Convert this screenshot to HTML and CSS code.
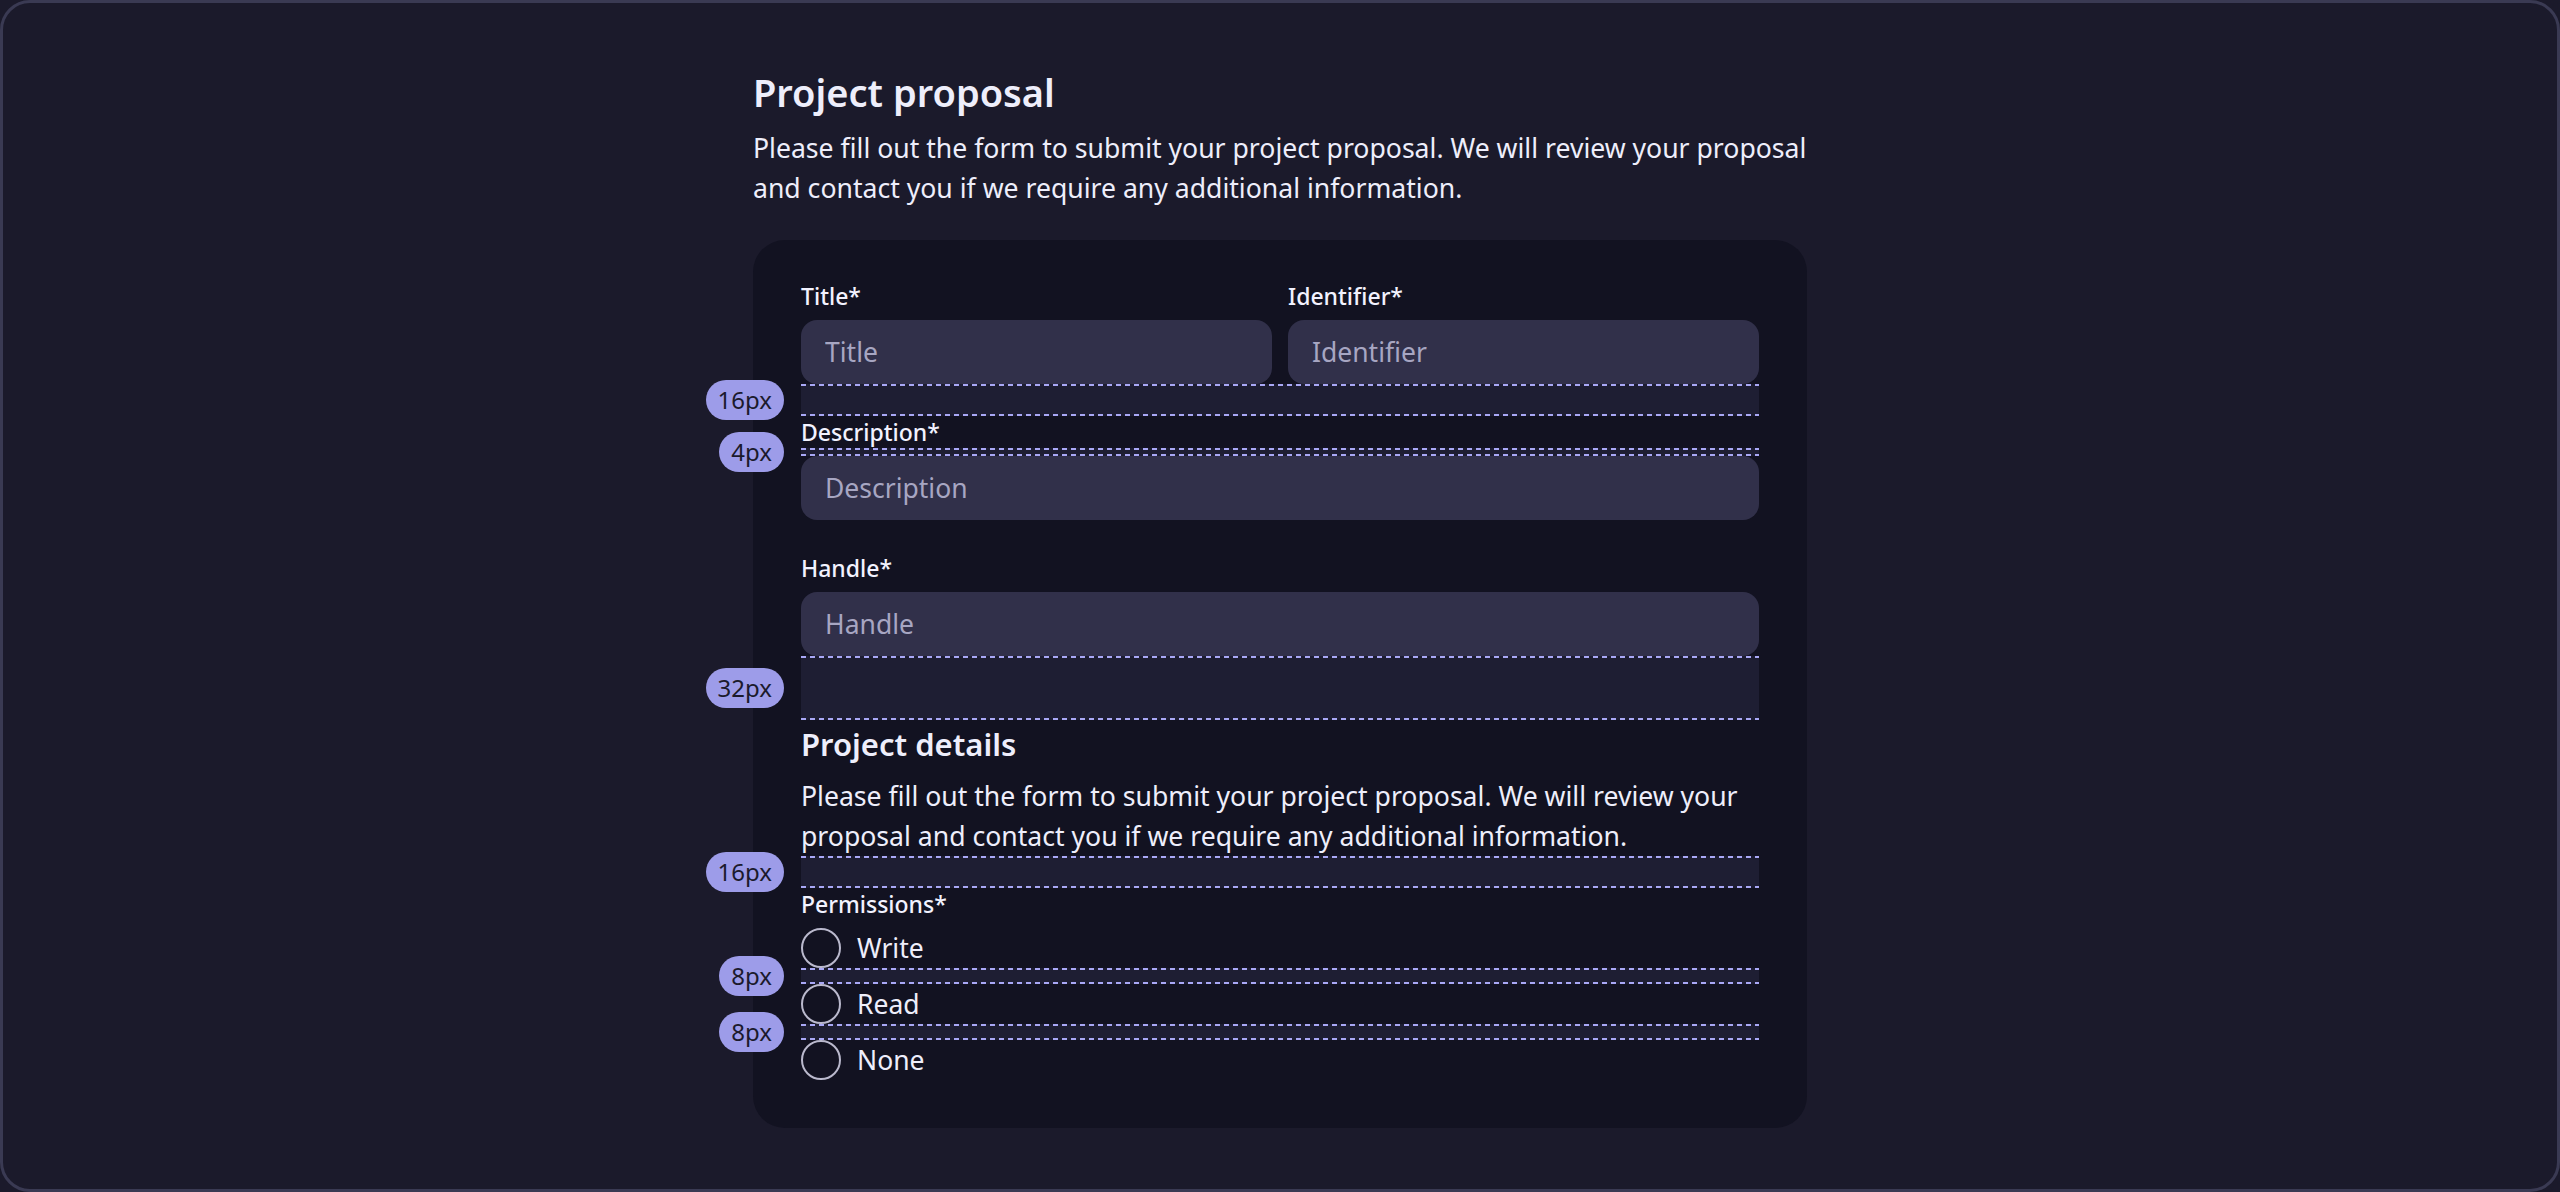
FILE: index.html
```html
<!DOCTYPE html>
<html>
	<head>
		<meta http-equiv="content-type" content="text/html; charset=utf-8" />
		<title>Project proposal</title>
		<link rel="stylesheet" href="styles.css">
	</head>

	<body>
		<div class="frame">
			<div class="intro">
				<h1 class="page-title">Project proposal</h1>
				<p class="lead">Please fill out the form to submit your project proposal. We will review your proposal and contact you if we require any additional information.</p>
			</div>

			<form class="card">
				<div class="row">
					<div class="field">
						<label class="label" for="title">Title*</label>
						<input class="input" id="title" type="text" placeholder="Title">
					</div>
					<div class="field">
						<label class="label" for="identifier">Identifier*</label>
						<input class="input" id="identifier" type="text" placeholder="Identifier">
					</div>
				</div>

				<div class="spacer s16"><span class="badge">16px</span></div>

				<div class="field tight">
					<label class="label" for="description">Description*</label>
					<div class="spacer s4"><span class="badge">4px</span></div>
					<input class="input" id="description" type="text" placeholder="Description">
				</div>

				<div class="field gap-top">
					<label class="label" for="handle">Handle*</label>
					<input class="input" id="handle" type="text" placeholder="Handle">
				</div>

				<div class="spacer s32"><span class="badge">32px</span></div>

				<h2 class="section-title">Project details</h2>
				<p class="section-text">Please fill out the form to submit your project proposal. We will review your proposal and contact you if we require any additional information.</p>

				<div class="spacer s16"><span class="badge">16px</span></div>

				<div class="field">
					<span class="label">Permissions*</span>
					<div class="radios">
						<label class="radio"><input type="radio" name="perm" value="write"><span>Write</span></label>
						<div class="spacer s8"><span class="badge">8px</span></div>
						<label class="radio"><input type="radio" name="perm" value="read"><span>Read</span></label>
						<div class="spacer s8"><span class="badge">8px</span></div>
						<label class="radio"><input type="radio" name="perm" value="none"><span>None</span></label>
					</div>
				</div>
			</form>
		</div>
	</body>
</html>
```

FILE: styles.css
```css
html, body {
	margin: 0;
	background: #1b1a2b;
}

body {
	font-family: "Noto Sans", "Open Sans", sans-serif;
	color: #eeeefb;
}

.frame {
	box-sizing: border-box;
	height: 100vh;
	border: 3px solid #3a3a53;
	border-radius: 30px;
	background: #1b1a2b;
	padding-top: 64px;
	display: flex;
	flex-direction: column;
	align-items: center;
}

.intro {
	width: 1054px;
}

.page-title {
	margin: 0;
	font-size: 38px;
	line-height: 50px;
	font-weight: 600;
}

.lead {
	margin: 11px -10px 32px 0;
	font-size: 26.6px;
	line-height: 40px;
}

.card {
	box-sizing: border-box;
	width: 1054px;
	padding: 40px 48px 48px;
	background: #121221;
	border-radius: 32px;
	display: flex;
	flex-direction: column;
}

.row {
	display: grid;
	grid-template-columns: 1fr 1fr;
	gap: 16px;
}

.field {
	display: flex;
	flex-direction: column;
	gap: 8px;
}

.field.tight {
	gap: 0;
}

.field.gap-top {
	margin-top: 32px;
}

.label {
	font-size: 23px;
	line-height: 32px;
	font-weight: 500;
	color: #f2f2ff;
}

.input {
	box-sizing: border-box;
	height: 64px;
	width: 100%;
	border: none;
	outline: none;
	border-radius: 16px;
	background: #31304a;
	padding: 0 24px;
	font-family: inherit;
	font-size: 26.5px;
	color: #eeeefb;
}

.input::placeholder {
	color: #a7a6c2;
}

/* spacing annotations */
.spacer {
	position: relative;
	background-color: #1e1e33;
	background-image:
		repeating-linear-gradient(to right, #a9a8f6 0 5px, transparent 5px 9px),
		repeating-linear-gradient(to right, #a9a8f6 0 5px, transparent 5px 9px);
	background-size: 100% 2px, 100% 2px;
	background-position: left top, left bottom;
	background-repeat: no-repeat;
}

.s4 { height: 8px; }
.s8 { height: 16px; }
.s16 { height: 32px; }
.s32 { height: 64px; }

.badge {
	position: absolute;
	right: calc(100% + 17px);
	top: 50%;
	transform: translateY(-50%);
	height: 40px;
	padding: 0 12px;
	border-radius: 20px;
	background: #9d9ce9;
	color: #1b1a2c;
	font-size: 24px;
	line-height: 40px;
	white-space: nowrap;
}

.section-title {
	margin: 0;
	font-size: 31px;
	line-height: 48px;
	font-weight: 600;
}

.section-text {
	margin: 8px -10px 0 0;
	font-size: 26.6px;
	line-height: 40px;
}

.radios {
	display: flex;
	flex-direction: column;
}

.radio {
	display: flex;
	align-items: center;
	gap: 16px;
	height: 40px;
	font-size: 26.5px;
}

.radio input {
	appearance: none;
	box-sizing: border-box;
	width: 40px;
	height: 40px;
	margin: 0;
	border: 2px solid #bab9cd;
	border-radius: 50%;
	background: transparent;
}
```
